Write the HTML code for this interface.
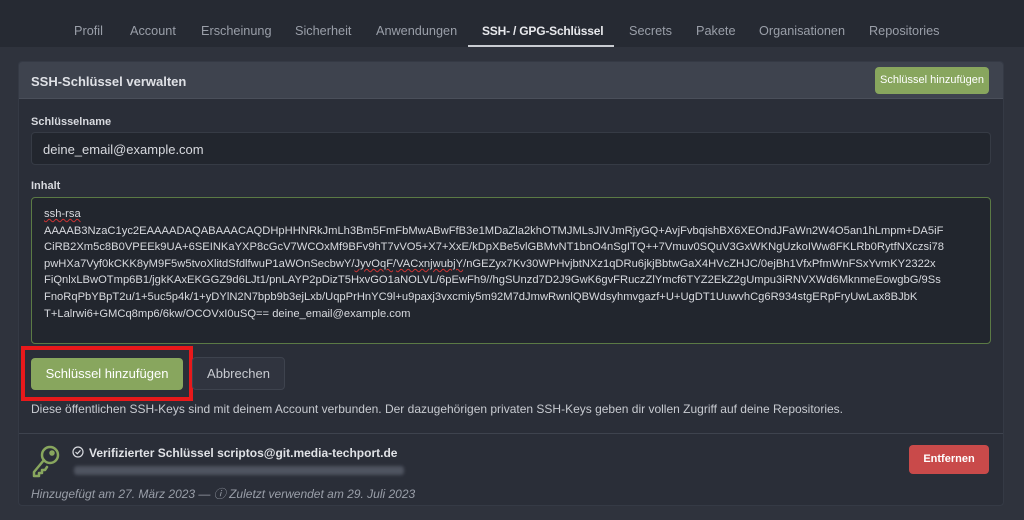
<!DOCTYPE html>
<html><head><meta charset="utf-8"><style>
*{box-sizing:border-box;margin:0;padding:0}
body{width:1024px;height:520px;overflow:hidden;background:#2f333d;font-family:"Liberation Sans",sans-serif;color:#d4d6dc;font-size:13px;position:relative}
.nav{position:absolute;left:0;top:0;width:1024px;height:47px;background:#262a33}
.nav span{position:absolute;top:24px;font-size:12.7px;color:#9a9fa9;white-space:nowrap}
.nav .act{color:#e8e9ed;font-weight:bold;font-size:12px;letter-spacing:-0.2px}
.ul{position:absolute;left:468px;top:45px;width:146px;height:2px;background:#c9ccd2}
.card{position:absolute;left:18px;top:61px;width:986px;height:445px;background:#2a2e38;border:1px solid #353a45;border-radius:4px;overflow:hidden}
.hdr{height:37px;background:#3e434e;border-bottom:1px solid #4a4f5a;position:relative}
.hdr .t{position:absolute;left:12px;top:12px;font-size:13px;font-weight:bold;color:#dfe1e6}
.btn{position:absolute;background:#88a65e;color:#fff;border-radius:4px;font-size:12px;text-align:center}
.lbl{position:absolute;font-size:11px;font-weight:bold;color:#d8dadf}
.inp{position:absolute;left:12px;top:70px;width:960px;height:33px;background:#22262e;border:1px solid #363b45;border-radius:4px;padding:9px 11px;font-size:13px;color:#d8dadf}
.ta{position:absolute;left:12px;top:135px;width:960px;height:147px;background:#22262e;border:1px solid #5b7a45;border-radius:4px;padding:8px 12px;font-size:11.2px;line-height:16.6px;color:#d8dadf;white-space:nowrap;overflow:hidden}
.sq{text-decoration:underline wavy #c33;text-decoration-thickness:1px}
</style></head><body>
<div class="nav">
<span style="left:74px">Profil</span><span style="left:130px">Account</span><span style="left:201px">Erscheinung</span><span style="left:295px">Sicherheit</span><span style="left:376px">Anwendungen</span><span class="act" style="left:482px">SSH- / GPG-Schlüssel</span><span style="left:629px">Secrets</span><span style="left:696px">Pakete</span><span style="left:759px">Organisationen</span><span style="left:869px">Repositories</span>
</div>
<div class="ul"></div>
<div class="card">
<div class="hdr"><span class="t">SSH-Schlüssel verwalten</span>
<div class="btn" style="left:856px;top:5px;width:114px;height:27px;line-height:27px;font-size:11px">Schlüssel hinzufügen</div></div>
<div class="lbl" style="left:12px;top:54px">Schlüsselname</div>
<div class="inp">deine_email@example.com</div>
<div class="lbl" style="left:12px;top:118px">Inhalt</div>
<div class="ta"><span class="sq">ssh-rsa</span><br>AAAAB3NzaC1yc2EAAAADAQABAAACAQDHpHHNRkJmLh3Bm5FmFbMwABwFfB3e1MDaZla2khOTMJMLsJIVJmRjyGQ+AvjFvbqishBX6XEOndJFaWn2W4O5an1hLmpm+DA5iF<br>CiRB2Xm5c8B0VPEEk9UA+6SEINKaYXP8cGcV7WCOxMf9BFv9hT7vVO5+X7+XxE/kDpXBe5vlGBMvNT1bnO4nSgITQ++7Vmuv0SQuV3GxWKNgUzkoIWw8FKLRb0RytfNXczsi78<br>pwHXa7Vyf0kCKK8yM9F5w5tvoXlitdSfdlfwuP1aWOnSecbwY/<span class="sq">JyvOqF</span>/<span class="sq">VACxnjwubjY</span>/nGEZyx7Kv30WPHvjbtNXz1qDRu6jkjBbtwGaX4HVcZHJC/0ejBh1VfxPfmWnFSxYvmKY2322x<br>FiQnlxLBwOTmp6B1/jgkKAxEKGGZ9d6LJt1/pnLAYP2pDizT5HxvGO1aNOLVL/6pEwFh9//hgSUnzd7D2J9GwK6gvFRuczZlYmcf6TYZ2EkZ2gUmpu3iRNVXWd6MknmeEowgbG/9Ss<br>FnoRqPbYBpT2u/1+5uc5p4k/1+yDYlN2N7bpb9b3ejLxb/UqpPrHnYC9l+u9paxj3vxcmiy5m92M7dJmwRwnlQBWdsyhmvgazf+U+UgDT1UuwvhCg6R934stgERpFryUwLax8BJbK<br>T+Lalrwi6+GMCq8mp6/6kw/OCOVxI0uSQ== deine_email@example.com</div>
<div class="btn" style="left:12px;top:296px;width:152px;height:32px;line-height:32px;font-size:13px">Schlüssel hinzufügen</div>
<div style="position:absolute;left:2px;top:284px;width:172px;height:55px;border:4px solid #e8191b"></div>
<div style="position:absolute;left:173px;top:295px;width:93px;height:33px;background:#30343f;border:1px solid #3e434e;border-radius:4px;text-align:center;line-height:31px;font-size:13px;color:#c8cbd1">Abbrechen</div>
<div style="position:absolute;left:12px;top:340px;font-size:12px;color:#c8cbd1;white-space:nowrap">Diese öffentlichen SSH-Keys sind mit deinem Account verbunden. Der dazugehörigen privaten SSH-Keys geben dir vollen Zugriff auf deine Repositories.</div>
<div style="position:absolute;left:0;top:371px;width:986px;height:1px;background:#3e434e"></div>
<svg style="position:absolute;left:12px;top:382px" width="30" height="34" viewBox="0 0 30 34"><g fill="none" stroke="#88a65e" stroke-width="2.5" stroke-linecap="round" stroke-linejoin="round"><circle cx="19" cy="11" r="8"/><circle cx="21" cy="9" r="1.5" fill="#88a65e"/><path d="M13 16 L3 28 L3 32 L8 32 L8 29 L11 29 L11 26 L14 26 L16 23"/></g></svg>
<svg style="position:absolute;left:53px;top:384px" width="12" height="12" viewBox="0 0 12 12"><circle cx="6" cy="6" r="5" fill="none" stroke="#d8dadf" stroke-width="1.2"/><path d="M3.5 6 L5.3 7.8 L8.5 4.3" fill="none" stroke="#d8dadf" stroke-width="1.2"/></svg>
<div style="position:absolute;left:70px;top:384px;font-size:12px;font-weight:bold;color:#e0e2e6">Verifizierter Schlüssel scriptos@git.media-techport.de</div>
<div style="position:absolute;left:55px;top:404px;width:330px;height:9px;background:#4f5460;border-radius:3px;filter:blur(1.5px)"></div>
<div style="position:absolute;left:12px;top:423px;font-size:12px;font-style:italic;color:#9a9fa9;white-space:nowrap">Hinzugefügt am 27. März 2023 — ⓘ Zuletzt verwendet am 29. Juli 2023</div>
<div style="position:absolute;left:890px;top:383px;width:80px;height:29px;background:#c94a4a;border-radius:4px;color:#fff;font-size:11px;font-weight:bold;text-align:center;line-height:29px">Entfernen</div>
</div>
</body></html>
